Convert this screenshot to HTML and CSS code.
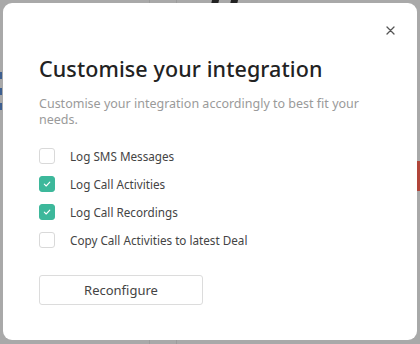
FILE: index.html
```html
<!DOCTYPE html>
<html>
<head>
<meta charset="utf-8">
<link rel="stylesheet" href="styles.css">
</head>
<body>
<div class="backdrop">
  <div class="bg-line bg-line-a"></div>
  <div class="bg-line bg-line-b"></div>
  <div class="bg-mark"></div>
  <div class="bg-red"></div>
  <div class="bg-blue bg-blue-1"></div>
  <div class="bg-blue bg-blue-2"></div>
  <div class="bg-blue bg-blue-3"></div>
  <div class="modal">
    <div class="modal-top">
      <button class="close" aria-label="Close">
        <svg width="9" height="9" viewBox="0 0 9 9"><path d="M1 1L8 8M8 1L1 8" stroke="#555" stroke-width="1.3" stroke-linecap="round"/></svg>
      </button>
    </div>
    <h1 class="title">Customise your integration</h1>
    <p class="subtitle">Customise your integration accordingly to best fit your needs.</p>
    <ul class="options">
      <li class="option"><span class="box"></span><span class="label">Log SMS Messages</span></li>
      <li class="option"><span class="box checked"><svg width="10" height="10" viewBox="0 0 10 10"><path d="M2.3 5.2L4.2 7L7.8 3.2" fill="none" stroke="#fff" stroke-width="1.1" stroke-linecap="round" stroke-linejoin="round"/></svg></span><span class="label">Log Call Activities</span></li>
      <li class="option"><span class="box checked"><svg width="10" height="10" viewBox="0 0 10 10"><path d="M2.3 5.2L4.2 7L7.8 3.2" fill="none" stroke="#fff" stroke-width="1.1" stroke-linecap="round" stroke-linejoin="round"/></svg></span><span class="label">Log Call Recordings</span></li>
      <li class="option"><span class="box"></span><span class="label">Copy Call Activities to latest Deal</span></li>
    </ul>
    <button class="reconfigure">Reconfigure</button>
  </div>
</div>
</body>
</html>
```
FILE: styles.css
```css
html, body {
  margin: 0;
  padding: 0;
}
body {
  background: #a9a9a9;
  font-family: "Noto Sans", "Open Sans", sans-serif;
}
.backdrop {
  position: relative;
  width: 420px;
  height: 344px;
  padding: 3px 3px 0 3px;
  box-sizing: border-box;
  overflow: hidden;
}
.bg-line {
  position: absolute;
  top: 0;
  width: 1px;
  height: 344px;
  background: #9c9c9c;
}
.bg-line-a { left: 149px; }
.bg-line-b { left: 176px; }
.bg-mark {
  position: absolute;
  top: -6px;
  left: 212px;
  width: 26px;
  height: 12px;
  border-left: 7px solid #222;
  border-right: 7px solid #222;
  box-sizing: border-box;
  transform: skewX(-12deg);
}
.bg-red {
  position: absolute;
  right: 0;
  top: 161px;
  width: 3px;
  height: 30px;
  background: #b0453a;
}
.bg-blue {
  position: absolute;
  left: 0;
  width: 2px;
  height: 7px;
  background: #3d5f90;
}
.bg-blue-1 { top: 72px; }
.bg-blue-2 { top: 88px; }
.bg-blue-3 { top: 103px; }
.modal {
  position: relative;
  width: 414px;
  height: 337px;
  background: #fff;
  border-radius: 9px;
  box-sizing: border-box;
  padding: 0 36px;
  display: flex;
  flex-direction: column;
  align-items: flex-start;
}
.modal-top {
  align-self: stretch;
  display: flex;
  justify-content: flex-end;
  height: 45px;
  margin-right: -14px;
  padding-top: 23px;
  box-sizing: border-box;
}
.close {
  border: 0;
  background: none;
  padding: 0;
  width: 9px;
  height: 9px;
  display: flex;
  cursor: pointer;
}
.title {
  margin: 7px 0 0 0;
  font-family: "Noto Sans", sans-serif;
  font-weight: 500;
  font-size: 21.5px;
  line-height: 28px;
  color: #222;
  letter-spacing: 0.1px;
}
.subtitle {
  margin: 13px 0 0 0;
  font-size: 12.5px;
  line-height: 16px;
  color: #9a9a9a;
  width: 320px;
}
.options {
  list-style: none;
  margin: 20px 0 0 0;
  padding: 0;
  display: flex;
  flex-direction: column;
  gap: 12px;
}
.option {
  display: flex;
  align-items: center;
  gap: 15px;
  height: 16px;
}
.box {
  width: 16px;
  height: 16px;
  box-sizing: border-box;
  border: 1px solid #d9d9d9;
  border-radius: 3px;
  background: #fff;
  display: flex;
  align-items: center;
  justify-content: center;
}
.box.checked {
  background: #3db89b;
  border-color: #3db89b;
}
.label {
  font-size: 11.7px;
  color: #444;
}
.reconfigure {
  margin-top: 27px;
  width: 164px;
  height: 30px;
  border: 1px solid #dcdcdc;
  border-radius: 3px;
  background: #fff;
  font-family: "Noto Sans", sans-serif;
  font-size: 13px;
  color: #444;
}
```
